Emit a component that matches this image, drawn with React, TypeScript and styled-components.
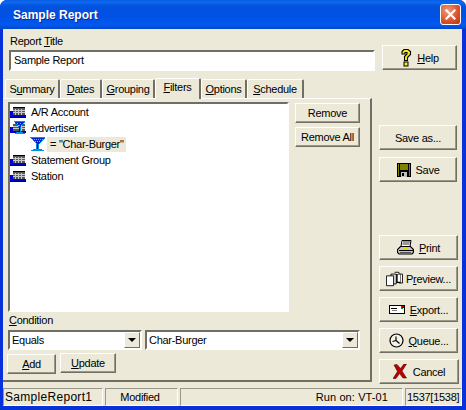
import React from 'react';
import styled, { createGlobalStyle } from 'styled-components';

const GlobalStyle = createGlobalStyle`
  html, body {
    margin: 0;
    padding: 0;
    background: #fff;
  }
`;

const face = '#ece9d8';
const shadow = '#716f64';
const mid = '#9a988a';

const Window = styled.div`
  width: 466px;
  height: 410px;
  box-sizing: border-box;
  display: flex;
  flex-direction: column;
  background: #0831d9;
  border-radius: 7px 7px 0 0;
  overflow: hidden;
  font-family: 'Liberation Sans', Arial, sans-serif;
  font-size: 11px;
  letter-spacing: -0.28px;
  color: #000;
`;

const TitleBar = styled.div`
  height: 29px;
  flex: none;
  display: flex;
  align-items: center;
  justify-content: space-between;
  padding: 0 5px 0 13px;
  background: linear-gradient(180deg, #0a5be0 0%, #0a6af0 8%, #0353dd 20%, #0050e6 55%, #0258ef 85%, #0148c8 100%);
  color: #fff;
  font-size: 12px;
  font-weight: bold;
  letter-spacing: 0;
  text-shadow: 1px 1px 0 #0a2a8c;
`;

const CloseButton = styled.div`
  width: 21px;
  height: 21px;
  box-sizing: border-box;
  display: flex;
  align-items: center;
  justify-content: center;
  border: 1px solid #fff;
  border-radius: 3px;
  background: radial-gradient(circle at 35% 30%, #ef9a7c, #d9502a 60%, #b63613);
`;

const Client = styled.div`
  flex: 1;
  margin: 0 4px 4px 3px;
  background: ${face};
  display: flex;
  flex-direction: column;
  min-height: 0;
`;

const Main = styled.div`
  flex: 1;
  display: flex;
  min-height: 0;
`;

const LeftColumn = styled.div`
  width: 369px;
  flex: none;
  display: flex;
  flex-direction: column;
`;

const TitleArea = styled.div`
  padding: 6px 0 0 6px;
  height: 44px;
  box-sizing: border-box;
  flex: none;
`;

const FieldLabel = styled.label`
  display: block;
  height: 15px;
  line-height: 13px;
  padding-left: 1px;
`;

const TextInput = styled.div`
  width: 366px;
  height: 21px;
  box-sizing: border-box;
  background: #fff;
  border: 2px solid;
  border-color: ${shadow} #fff #fff ${shadow};
  padding-left: 3px;
  line-height: 17px;
`;

const TabStrip = styled.div`
  height: 25px;
  flex: none;
  display: flex;
  align-items: flex-end;
  padding-left: 2px;
  box-sizing: border-box;
`;

const Tab = styled.div<{ $active?: boolean; $w: number }>`
  width: ${({ $w }) => $w}px;
  box-sizing: border-box;
  height: ${({ $active }) => ($active ? 21 : 19)}px;
  margin-bottom: ${({ $active }) => ($active ? -1 : 0)}px;
  position: relative;
  background: ${face};
  border-top: 1px solid #fff;
  border-left: 1px solid #fff;
  border-right: 2px solid ${shadow};
  border-radius: 2px 2px 0 0;
  text-align: center;
  line-height: ${({ $active }) => ($active ? 17 : 19)}px;
`;

const TabPage = styled.div`
  flex: 1;
  box-sizing: border-box;
  border-top: 1px solid #fff;
  border-right: 2px solid ${shadow};
  border-bottom: 2px solid ${shadow};
  padding: 3px 10px 0 5px;
  display: flex;
  flex-direction: column;
  margin-bottom: 6px;
`;

const ListRow = styled.div`
  display: flex;
  gap: 6px;
`;

const TreeBox = styled.div`
  width: 281px;
  height: 210px;
  box-sizing: border-box;
  background: #fff;
  border: 2px solid;
  border-color: ${shadow} #fff #fff ${shadow};
`;

const TreeRow = styled.div<{ $child?: boolean }>`
  height: 16px;
  display: flex;
  align-items: center;
  gap: 5px;
  padding-left: ${({ $child }) => ($child ? 20 : 0)}px;
`;

const NodeText = styled.span<{ $selected?: boolean }>`
  background: ${({ $selected }) => ($selected ? face : 'transparent')};
  padding: 0 2px 0 ${({ $selected }) => ($selected ? 3 : 0)}px;
  line-height: 15px;
  margin-left: ${({ $selected }) => ($selected ? -3 : 0)}px;
`;

const SideButtons = styled.div`
  display: flex;
  flex-direction: column;
  gap: 4px;
  padding-top: 1px;
`;

const Button = styled.div<{ $w: number; $h?: number; $gap?: number }>`
  width: ${({ $w }) => $w}px;
  height: ${({ $h }) => $h ?? 24}px;
  flex: none;
  box-sizing: border-box;
  background: ${face};
  border: 1px solid;
  border-color: #fff ${shadow} ${shadow} #fff;
  box-shadow: inset -1px -1px 0 ${mid};
  display: flex;
  align-items: center;
  justify-content: center;
  gap: ${({ $gap }) => $gap ?? 5}px;
`;

const AddButton = styled(Button)`
  margin-top: 1px;
`;

const HelpButton = styled(Button)`
  margin-left: 3px;
`;

const ConditionLabel = styled(FieldLabel)`
  margin-top: 2px;
  height: 16px;
`;

const ComboRow = styled.div`
  display: flex;
  gap: 3px;
`;

const Combo = styled.div<{ $w: number }>`
  width: ${({ $w }) => $w}px;
  height: 20px;
  box-sizing: border-box;
  background: #fff;
  border: 2px solid;
  border-color: ${shadow} #fff #fff ${shadow};
  display: flex;
  align-items: center;
  justify-content: space-between;
  padding-left: 2px;
`;

const ComboArrow = styled.div`
  width: 16px;
  height: 16px;
  flex: none;
  box-sizing: border-box;
  background: ${face};
  border: 1px solid;
  border-color: #fff ${shadow} ${shadow} #fff;
  display: flex;
  align-items: center;
  justify-content: center;
`;

const ArrowGlyph = styled.div`
  width: 0;
  height: 0;
  border-left: 4px solid transparent;
  border-right: 4px solid transparent;
  border-top: 4px solid #000;
`;

const ActionRow = styled.div`
  display: flex;
  align-items: flex-start;
  gap: 4px;
  margin: 3px 0 0 -1px;
`;

const RightColumn = styled.div`
  flex: 1;
  display: flex;
  flex-direction: column;
  align-items: flex-start;
  padding: 16px 0 0 7px;
`;

const ButtonGroup = styled.div<{ $top: number; $gap: number }>`
  display: flex;
  flex-direction: column;
  gap: ${({ $gap }) => $gap}px;
  margin-top: ${({ $top }) => $top}px;
`;

const StatusBar = styled.div`
  height: 18px;
  flex: none;
  display: flex;
  gap: 2px;
`;

const StatusCell = styled.div<{ $w?: number; $align?: string; $pad?: number }>`
  ${({ $w }) => ($w ? `width: ${$w}px; flex: none;` : 'flex: 1;')}
  box-sizing: border-box;
  border: 1px solid;
  border-color: ${mid} #fff #fff ${mid};
  line-height: 17px;
  text-align: ${({ $align }) => $align ?? 'left'};
  padding: 0 ${({ $pad }) => $pad ?? 0}px 0 1px;
  white-space: nowrap;
`;

const NameCell = styled(StatusCell)`
  font-size: 12px;
  letter-spacing: 0.3px;
`;

const RunCell = styled(StatusCell)`
  letter-spacing: 0.1px;
`;

const Key = styled.span`
  text-decoration: underline;
`;

const Pixel = styled.svg`
  display: block;
  flex: none;
  shape-rendering: crispEdges;
`;

const Smooth = styled.svg`
  display: block;
  flex: none;
`;

const TableIcon = () => (
  <Pixel width="16" height="11" viewBox="0 0 16 11">
    <rect x="0" y="4" width="3" height="6" fill="#0000d0" />
    <rect x="0" y="8" width="16" height="2" fill="#0000d0" />
    <rect x="3" y="1" width="12" height="7" fill="#585858" />
    <path d="M5.500 2v6M8.500 2v6M11.500 2v6M3 3.500h12M3 5.500h12" stroke="#c8c8c8" strokeWidth="1" />
    <rect x="3" y="0" width="12" height="1" fill="#000" />
    <rect x="0" y="10" width="16" height="1" fill="#000" />
  </Pixel>
);

const FunnelShape = () => (
  <>
    <path d="M0 0h15v1l-6 6v5h3v1h2v1H1v-1h2v-1h3V7L0 1z" fill="#0090e8" />
    <path d="M1 1h13l-6 6H7z" fill="#0000c0" opacity="0.75" />
    <path d="M2 2h1v1H2zM4 2h1v1H4zM6 2h1v1H6zM8 2h1v1H8zM10 2h1v1h-1zM12 2h1v1h-1zM5 4h1v1H5zM7 4h1v1H7zM9 4h1v1H9z" fill="#40d0ff" />
    <path d="M7 7h1v5H7z" fill="#000080" />
  </>
);

const FunnelIcon = () => (
  <Pixel width="15" height="15" viewBox="0 0 15 15">
    <FunnelShape />
  </Pixel>
);

const FilteredTableIcon = () => (
  <Pixel width="16" height="14" viewBox="0 0 16 14">
    <rect x="0" y="6" width="3" height="6" fill="#0000d0" />
    <rect x="0" y="10" width="16" height="2" fill="#0000d0" />
    <rect x="3" y="3" width="12" height="7" fill="#585858" />
    <path d="M11.500 4v6M3 5.500h12M3 7.500h12" stroke="#c8c8c8" />
    <g transform="translate(4 0) scale(0.75 0.9)">
      <FunnelShape />
    </g>
  </Pixel>
);

const HelpIcon = () => (
  <Smooth width="12" height="19" viewBox="0 0 12 19">
    <path
      d="M2 6V3.500L4 1.500h4L10.500 3.500v3L7.500 9.500v3h-3V8.500L7 6V4.500H5V6z"
      fill="#f8e818"
      stroke="#000"
      strokeWidth="1.100"
    />
    <rect x="4" y="14" width="4" height="4" fill="#f8e818" stroke="#000" />
  </Smooth>
);

const SaveIcon = () => (
  <Pixel width="14" height="14" viewBox="0 0 14 14">
    <rect width="14" height="14" fill="#000" />
    <rect x="3" y="1" width="8" height="6" fill="#808000" />
    <rect x="1" y="1" width="1" height="12" fill="#808000" />
    <rect x="12" y="1" width="1" height="12" fill="#808000" />
    <rect x="4" y="9" width="6" height="5" fill="#c0c0c0" />
    <rect x="5" y="10" width="2" height="3" fill="#000" />
  </Pixel>
);

const PrintIcon = () => (
  <Smooth width="17" height="15" viewBox="0 0 17 15">
    <path d="M5 .5h9l-1 6H4z" fill="#fff" stroke="#000" />
    <path d="M6 2h7M5.500 4h7" stroke="#333" />
    <path d="M3.500 6.500h10l3 3v3l-1.500 1.500H2L.5 12.500V9.500z" fill="#c8c8c0" stroke="#000" strokeWidth="1.200" />
    <path d="M2 10.500h14" stroke="#000" />
    <rect x="7" y="8" width="3" height="1.500" fill="#e8d800" />
    <path d="M3 12.500h11" stroke="#555" />
  </Smooth>
);

const PreviewIcon = () => (
  <Smooth width="17" height="16" viewBox="0 0 19 16">
    <path d="M9.500.5h5v2h4v10h-4" fill="#fff" stroke="#000" />
    <path d="M5.500 2.500h6v11h-6z" fill="#e0e0e0" stroke="#000" />
    <path d="M11.500 2.500h5v10h-5z" fill="#000" />
    <path d="M13 3h3v8h-3z" fill="#fff" />
    <path d="M.5 4.500h8v11h-8z" fill="#fff" stroke="#000" />
  </Smooth>
);

const ExportIcon = () => (
  <Pixel width="16" height="9" viewBox="0 0 16 9">
    <rect x="0" y="0" width="16" height="9" fill="#000" />
    <rect x="1" y="1" width="14" height="7" fill="#fff" />
    <rect x="2" y="3" width="6" height="1" fill="#000" />
    <rect x="3" y="5" width="5" height="1" fill="#808080" />
    <rect x="12" y="1" width="3" height="2" fill="#e00000" />
    <rect x="13" y="2" width="2" height="1" fill="#0000c0" />
    <rect x="12" y="3" width="2" height="1" fill="#00a000" />
  </Pixel>
);

const QueueIcon = () => (
  <Smooth width="15" height="15" viewBox="0 0 15 15">
    <circle cx="7.500" cy="7.500" r="6.500" fill="#f4f2e6" stroke="#000" strokeWidth="1.200" />
    <path d="M7 3.500v4l3.500 3M7 7.500l-3.500 1" stroke="#000" strokeWidth="1.200" fill="none" />
  </Smooth>
);

const CancelIcon = () => (
  <Smooth width="14" height="15" viewBox="0 0 14 15">
    <path d="M1 1l3-.5 3.500 4L11 0h2.500L9 7l4.500 7H10L6.500 9.500 3 14.500H0L4.500 7.500z" fill="#b80000" stroke="#600000" strokeWidth="0.600" />
  </Smooth>
);

const CloseGlyph = () => (
  <svg width="11" height="11" viewBox="0 0 11 11">
    <path d="M1.500 1.500l8 8M9.500 1.500l-8 8" stroke="#fff" strokeWidth="2.200" strokeLinecap="square" />
  </svg>
);

const tabs: { id: string; w: number; node: React.ReactNode; active?: boolean }[] = [
  { id: 'summary', w: 55, node: <>S<Key>u</Key>mmary</> },
  { id: 'dates', w: 42, node: <><Key>D</Key>ates</> },
  { id: 'grouping', w: 53, node: <><Key>G</Key>rouping</> },
  { id: 'filters', w: 46, node: <><Key>F</Key>ilters</>, active: true },
  { id: 'options', w: 46, node: <><Key>O</Key>ptions</> },
  { id: 'schedule', w: 57, node: <><Key>S</Key>chedule</> },
];

const App = () => {
  return (
    <>
      <GlobalStyle />
      <Window>
        <TitleBar>
          <span>Sample Report</span>
          <CloseButton>
            <CloseGlyph />
          </CloseButton>
        </TitleBar>
        <Client>
          <Main>
            <LeftColumn>
              <TitleArea>
                <FieldLabel>
                  Report <Key>T</Key>itle
                </FieldLabel>
                <TextInput>Sample Report</TextInput>
              </TitleArea>
              <TabStrip>
                {tabs.map((tab) => (
                  <Tab key={tab.id} $w={tab.w} $active={tab.active}>
                    {tab.node}
                  </Tab>
                ))}
              </TabStrip>
              <TabPage>
                <ListRow>
                  <TreeBox>
                    <TreeRow>
                      <TableIcon />
                      <NodeText>A/R Account</NodeText>
                    </TreeRow>
                    <TreeRow>
                      <FilteredTableIcon />
                      <NodeText>Advertiser</NodeText>
                    </TreeRow>
                    <TreeRow $child>
                      <FunnelIcon />
                      <NodeText $selected>= "Char-Burger"</NodeText>
                    </TreeRow>
                    <TreeRow>
                      <TableIcon />
                      <NodeText>Statement Group</NodeText>
                    </TreeRow>
                    <TreeRow>
                      <TableIcon />
                      <NodeText>Station</NodeText>
                    </TreeRow>
                  </TreeBox>
                  <SideButtons>
                    <Button $w={65} $h={20}>Remove</Button>
                    <Button $w={65} $h={20}>Remove All</Button>
                  </SideButtons>
                </ListRow>
                <ConditionLabel>
                  <Key>C</Key>ondition
                </ConditionLabel>
                <ComboRow>
                  <Combo $w={134}>
                    <span>Equals</span>
                    <ComboArrow>
                      <ArrowGlyph />
                    </ComboArrow>
                  </Combo>
                  <Combo $w={215}>
                    <span>Char-Burger</span>
                    <ComboArrow>
                      <ArrowGlyph />
                    </ComboArrow>
                  </Combo>
                </ComboRow>
                <ActionRow>
                  <AddButton $w={49} $h={20}>
                    <span>
                      <Key>A</Key>dd
                    </span>
                  </AddButton>
                  <Button $w={56} $h={20}>
                    <span>
                      <Key>U</Key>pdate
                    </span>
                  </Button>
                </ActionRow>
              </TabPage>
            </LeftColumn>
            <RightColumn>
              <ButtonGroup $top={0} $gap={0}>
                <HelpButton $w={75} $h={25}>
                  <HelpIcon />
                  <span>
                    <Key>H</Key>elp
                  </span>
                </HelpButton>
              </ButtonGroup>
              <ButtonGroup $top={55} $gap={7}>
                <Button $w={78} $h={25}>Save as...</Button>
                <Button $w={78} $h={25}>
                  <SaveIcon />
                  <span>Save</span>
                </Button>
              </ButtonGroup>
              <ButtonGroup $top={53} $gap={6}>
                <Button $w={79} $h={25}>
                  <PrintIcon />
                  <span>
                    <Key>P</Key>rint
                  </span>
                </Button>
                <Button $w={79} $h={25} $gap={3}>
                  <PreviewIcon />
                  <span>
                    P<Key>r</Key>eview...
                  </span>
                </Button>
                <Button $w={79} $h={25}>
                  <ExportIcon />
                  <span>
                    <Key>E</Key>xport...
                  </span>
                </Button>
                <Button $w={79} $h={25}>
                  <QueueIcon />
                  <span>
                    <Key>Q</Key>ueue...
                  </span>
                </Button>
                <Button $w={80} $h={25} $gap={6}>
                  <CancelIcon />
                  <span>Cancel</span>
                </Button>
              </ButtonGroup>
            </RightColumn>
          </Main>
          <StatusBar>
            <NameCell $w={100}>SampleReport1</NameCell>
            <StatusCell $w={73} $align="center" $pad={4}>Modified</StatusCell>
            <RunCell $align="right" $pad={14}>Run on: VT-01</RunCell>
            <StatusCell $w={57}>1537[1538]</StatusCell>
          </StatusBar>
        </Client>
      </Window>
    </>
  );
};

export default App;
